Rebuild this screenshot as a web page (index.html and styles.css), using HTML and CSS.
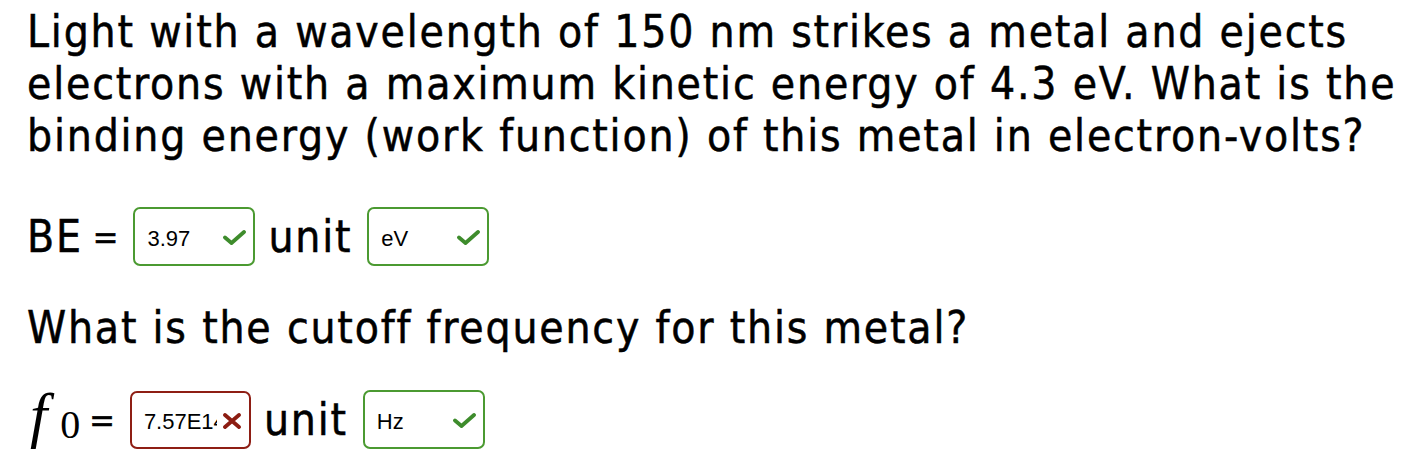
FILE: index.html
```html
<!DOCTYPE html>
<html>
<head>
<meta charset="utf-8">
<link rel="stylesheet" href="styles.css">
</head>
<body>
<div class="page">
  <p class="q">Light with a wavelength of 150 nm strikes a metal and ejects electrons with a maximum kinetic energy of 4.3 eV. What is the binding energy (work function) of this metal in electron-volts?</p>
  <div class="row row-be">
    <span class="lbl">BE</span>
    <span class="eq">=</span>
    <span class="box ok"><span class="val">3.97</span><svg class="mark" viewBox="0 0 23 15"><path d="M2 7.5 L8.5 13 L21 2" fill="none" stroke="#3e8c2c" stroke-width="3.8" stroke-linecap="round" stroke-linejoin="round"/></svg></span>
    <span class="lbl unit">unit</span>
    <span class="box ok"><span class="val">eV</span><svg class="mark" viewBox="0 0 23 15"><path d="M2 7.5 L8.5 13 L21 2" fill="none" stroke="#3e8c2c" stroke-width="3.8" stroke-linecap="round" stroke-linejoin="round"/></svg></span>
  </div>
  <p class="q q2">What is the cutoff frequency for this metal?</p>
  <div class="row row-f">
    <span class="math"><i>f</i><sub>0</sub></span>
    <span class="eq">=</span>
    <span class="box bad"><span class="val">7.57E14</span><svg class="mark x" viewBox="0 0 20 16"><path d="M3 2 L17 14 M17 2 L3 14" fill="none" stroke="#8c1d12" stroke-width="3.8" stroke-linecap="round"/></svg></span>
    <span class="lbl unit">unit</span>
    <span class="box ok"><span class="val">Hz</span><svg class="mark" viewBox="0 0 23 15"><path d="M2 7.5 L8.5 13 L21 2" fill="none" stroke="#3e8c2c" stroke-width="3.8" stroke-linecap="round" stroke-linejoin="round"/></svg></span>
  </div>
</div>
</body>
</html>
```
FILE: styles.css
```css
html, body { margin: 0; padding: 0; background: #fff; }
.page {
  padding: 6px 0 0 27px;
  font-family: "DejaVu Sans Condensed", "DejaVu Sans", sans-serif;
  font-stretch: condensed;
  font-variant-ligatures: none;
  letter-spacing: 1.8px;
  color: #000;
}
.q {
  margin: 0;
  width: 1375px;
  font-size: 44px;
  line-height: 52px;
  -webkit-text-stroke: 0.5px #000;
}
.q2 { margin-top: 36px; }
.row {
  display: flex;
  align-items: center;
  height: 59px;
}
.row-be { margin-top: 45px; }
.row-f { margin-top: 36px; }
.lbl { font-size: 44px; line-height: 52px; -webkit-text-stroke: 0.5px #000; }
.eq { font-size: 34px; line-height: 52px; margin: 0 15px 0 10px; letter-spacing: 0; -webkit-text-stroke: 0.6px #000; }
.unit { margin: 0 15px 0 13px; }
.box {
  box-sizing: border-box;
  width: 122px;
  height: 59px;
  border: 2px solid #4b9a31;
  border-radius: 7px;
  display: flex;
  align-items: center;
  padding: 5px 7px 0 12px;
  font-family: "Liberation Sans", Arial, sans-serif;
  font-stretch: normal;
  letter-spacing: 0;
  font-size: 22px;
}
.box.bad { border-color: #8e1e14; width: 121px; height: 58px; }
.val { width: 73px; overflow: hidden; white-space: nowrap; }
.mark { width: 23px; height: 15px; flex: none; margin-left: auto; margin-top: -3px; }
.mark.x { width: 20px; height: 16px; }
.math { font-family: "Liberation Serif", serif; font-size: 62px; line-height: 52px; margin-left: 3px; letter-spacing: 0; }
.math i { font-style: italic; }
.math sub { font-size: 40px; vertical-align: -2px; font-style: normal; margin-left: 13px; }
.row-f .eq { margin-left: 9px; margin-right: 15px; }
```
